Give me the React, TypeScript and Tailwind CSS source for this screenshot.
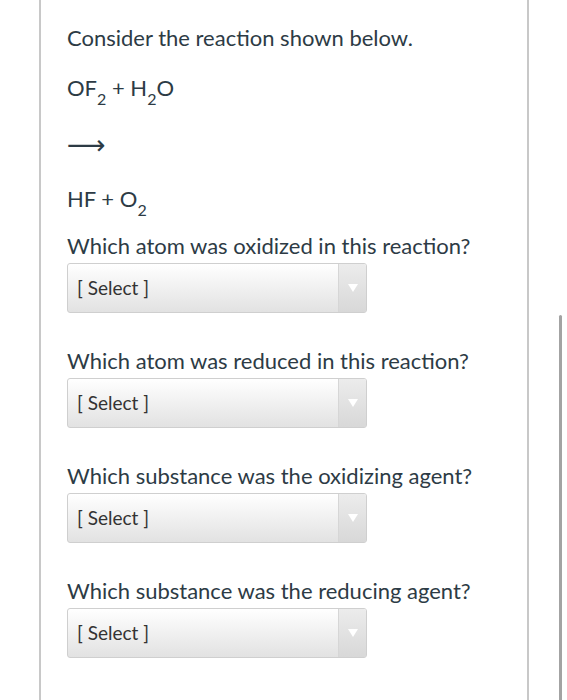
export default function App() {
  const questions = [
    'Which atom was oxidized in this reaction?',
    'Which atom was reduced in this reaction?',
    'Which substance was the oxidizing agent?',
    'Which substance was the reducing agent?',
  ];

  return (
    <div className="relative h-[700px] w-[567px] overflow-hidden bg-white font-['Lato',sans-serif] text-[#2d3b45]">
      {/* question panel */}
      <div className="ml-[39px] h-full w-[490px] border-x-2 border-[#c8c8c8] pl-[26px] pt-[23px]">
        <p className="text-[22px] leading-[30px]">Consider the reaction shown below.</p>
        <p className="mt-[20px] text-[22px] leading-[30px]">
          OF<sub className="align-[-5px] text-[16px] leading-none">2</sub> + H<sub className="align-[-5px] text-[16px] leading-none">2</sub>O
        </p>
        <p className="mt-[27px] font-['DejaVu_Sans',sans-serif] text-[27px] leading-[30px]">⟶</p>
        <p className="mt-[24px] text-[22px] leading-[30px]">
          HF + O<sub className="align-[-5px] text-[16px] leading-none">2</sub>
        </p>

        {questions.map((q, i) => (
          <div key={i} className={i === 0 ? 'mt-[17px]' : 'mt-[33px]'}>
            <p className="text-[22px] leading-[30px]">{q}</p>
            <div className="mt-[2px] flex h-[50px] w-[300px] overflow-hidden rounded-[3px] border border-[#cfcfcf] bg-gradient-to-b from-white to-[#e2e2e2]">
              <span className="flex flex-1 items-center whitespace-pre pl-[9px] text-[19px] text-[#333]">[ Select ]</span>
              <span className="flex w-[28px] items-center justify-center border-l border-[#d6d6d6] bg-gradient-to-b from-[#ececec] to-[#d8d8d8]">
                <svg width="10" height="8" viewBox="0 0 10 8">
                  <path d="M0 0 L10 0 L5 8 Z" fill="#fff" />
                </svg>
              </span>
            </div>
          </div>
        ))}
      </div>

      {/* scrollbar thumb */}
      <div className="absolute left-[559px] top-[315px] h-[400px] w-[3px] rounded-t-full bg-[#a3a3a3]" />
    </div>
  );
}
